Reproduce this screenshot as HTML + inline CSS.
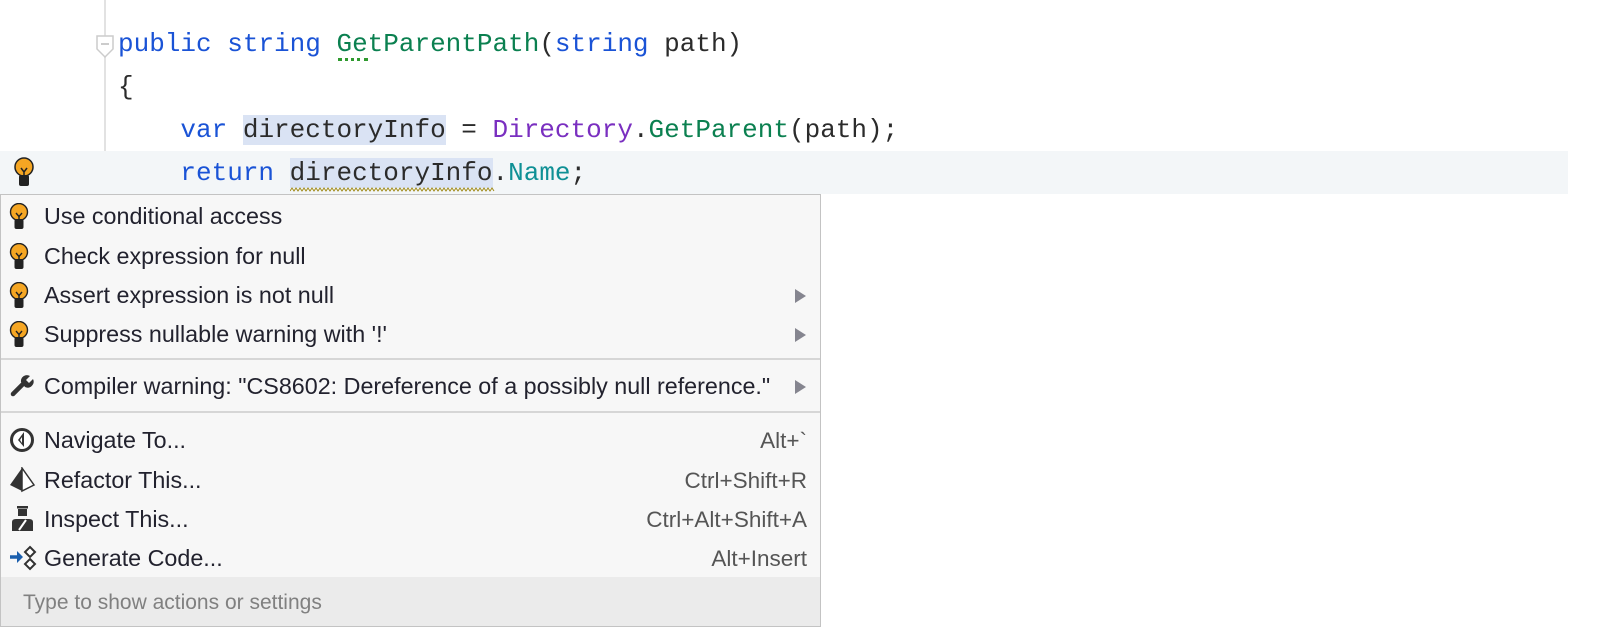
<!DOCTYPE html>
<html><head><style>
body{margin:0;width:1600px;height:640px;background:#fff;position:relative;overflow:hidden;font-family:"Liberation Sans",sans-serif}
.code{position:absolute;left:118px;font-family:"Liberation Mono",monospace;font-size:26px;color:#2b2b2b;white-space:pre;line-height:43px}
.kw{color:#1a53d6}.fn{color:#0b8050}.ty{color:#7a2fc0}.pr{color:#0f9095}
.sel{background:#dae3f4}
.menu{position:absolute;left:0;top:194px;width:819px;height:431px;background:#f7f7f7;border:1px solid #c3c3c3}
.it{position:absolute;left:0;width:819px;height:39px;font-size:23.3px;color:#22222e;line-height:39px}
.it .t{position:absolute;left:43px}
.it .k{position:absolute;right:13px;color:#555;font-size:22.5px}
.it .a{position:absolute;right:14px;top:13px;width:0;height:0;border-left:11px solid #85858f;border-top:7px solid transparent;border-bottom:7px solid transparent}
.it svg{position:absolute;left:8px;top:6px}
.sep{position:absolute;left:0;width:819px;height:2px;background:#d6d6d6}
</style></head><body>
<div style="position:absolute;left:104px;top:0;width:2px;height:194px;background:#e2e2e2"></div>
<svg style="position:absolute;left:96px;top:35px" width="18" height="24"><path d="M1 1H17V14L9 22L1 14Z" fill="#fff" stroke="#ccc" stroke-width="1.5"/><path d="M5 9H13" stroke="#bbb" stroke-width="1.5"/></svg>
<div style="position:absolute;left:0;top:151px;width:1568px;height:43px;background:#f3f6f8"></div>
<div class="code" style="top:23px"><span class="kw">public</span> <span class="kw">string</span> <span class="fn">GetParentPath</span>(<span class="kw">string</span> path)</div>
<div style="position:absolute;left:338px;top:58px;width:30px;border-top:3px dotted #2f9a2f"></div>
<div class="code" style="top:66px">{</div>
<div class="code" style="top:109px">    <span class="kw">var</span> <span class="sel">directoryInfo</span> = <span class="ty">Directory</span>.<span class="fn">GetParent</span>(path);</div>
<div class="code" style="top:152px">    <span class="kw">return</span> <span class="sel">directoryInfo</span>.<span class="pr">Name</span>;</div>
<svg style="position:absolute;left:290px;top:187px" width="205" height="5"><path d="M0 4 L2 1 L4 4 L6 1 L8 4 L10 1 L12 4 L14 1 L16 4 L18 1 L20 4 L22 1 L24 4 L26 1 L28 4 L30 1 L32 4 L34 1 L36 4 L38 1 L40 4 L42 1 L44 4 L46 1 L48 4 L50 1 L52 4 L54 1 L56 4 L58 1 L60 4 L62 1 L64 4 L66 1 L68 4 L70 1 L72 4 L74 1 L76 4 L78 1 L80 4 L82 1 L84 4 L86 1 L88 4 L90 1 L92 4 L94 1 L96 4 L98 1 L100 4 L102 1 L104 4 L106 1 L108 4 L110 1 L112 4 L114 1 L116 4 L118 1 L120 4 L122 1 L124 4 L126 1 L128 4 L130 1 L132 4 L134 1 L136 4 L138 1 L140 4 L142 1 L144 4 L146 1 L148 4 L150 1 L152 4 L154 1 L156 4 L158 1 L160 4 L162 1 L164 4 L166 1 L168 4 L170 1 L172 4 L174 1 L176 4 L178 1 L180 4 L182 1 L184 4 L186 1 L188 4 L190 1 L192 4 L194 1 L196 4 L198 1 L200 4 L202 1 L204 4" fill="none" stroke="#a08a1a" stroke-width="1"/></svg>
<svg style="position:absolute;left:13px;top:157px" width="22" height="32"><circle cx="11" cy="10" r="9" fill="#f5a623" stroke="#222" stroke-width="1.5"/><rect x="6" y="18" width="10" height="11" rx="2" fill="#222"/><path d="M8 11L11 15L14 11M11 15V19" stroke="#222" stroke-width="1.5" fill="none"/></svg>
<div class="menu">
<svg width="0" height="0" style="position:absolute"><defs><g id="bulb"><circle cx="10" cy="9" r="8.5" fill="#f5a623" stroke="#222" stroke-width="1.4"/><rect x="5.5" y="16" width="9" height="10" rx="2" fill="#222"/><path d="M7 10L10 13.5L13 10M10 13.5V17" stroke="#222" stroke-width="1.4" fill="none"/></g></defs></svg>
<div class="it" style="top:2px"><svg width="22" height="28"><use href="#bulb"/></svg><span class="t">Use conditional access</span></div>
<div class="it" style="top:42px"><svg width="22" height="28"><use href="#bulb"/></svg><span class="t">Check expression for null</span></div>
<div class="it" style="top:81px"><svg width="22" height="28"><use href="#bulb"/></svg><span class="t">Assert expression is not null</span><span class="a"></span></div>
<div class="it" style="top:120px"><svg width="22" height="28"><use href="#bulb"/></svg><span class="t">Suppress nullable warning with '!'</span><span class="a"></span></div>
<div class="sep" style="top:163px"></div>
<div class="it" style="top:172px"><svg width="28" height="26"><path d="M4 21L14 11" stroke="#333" stroke-width="4.5" stroke-linecap="round"/><path d="M12 9A6 6 0 0 1 21 3L17 7L20 10L24 6A6 6 0 0 1 16 14Z" fill="#333"/></svg><span class="t">Compiler warning: "CS8602: Dereference of a possibly null reference."</span><span class="a"></span></div>
<div class="sep" style="top:216px"></div>
<div class="it" style="top:226px"><svg width="28" height="28"><circle cx="13" cy="13" r="10.5" fill="#fff" stroke="#333" stroke-width="3"/><path d="M15 5L9 13L15 20Z" fill="#333"/><path d="M13 10L11 13L13 16Z" fill="#fff"/></svg><span class="t">Navigate To...</span><span class="k">Alt+`</span></div>
<div class="it" style="top:266px"><svg width="28" height="28"><path d="M13 1L1 18L13 24Z" fill="#333"/><path d="M13 1L25 18L13 24Z" fill="#fff" stroke="#333" stroke-width="1.5"/></svg><span class="t">Refactor This...</span><span class="k">Ctrl+Shift+R</span></div>
<div class="it" style="top:305px"><svg width="28" height="28"><rect x="8" y="0" width="11" height="2.5" fill="#333"/><rect x="9" y="3" width="9" height="7" fill="#333"/><path d="M3 25V16Q3 13 7 13H20Q24 13 24 16V25Z" fill="#333"/><path d="M10 24L17 14" stroke="#fff" stroke-width="2"/></svg><span class="t">Inspect This...</span><span class="k">Ctrl+Alt+Shift+A</span></div>
<div class="it" style="top:344px"><svg width="30" height="28"><path d="M1 12H9" stroke="#1b5fad" stroke-width="3.5"/><path d="M8 6L14 12L8 18Z" fill="#1b5fad"/><path d="M21 2L26 7L21 12L16 7Z M21 14L26 19L21 24L16 19Z" fill="#fff" stroke="#333" stroke-width="2"/></svg><span class="t">Generate Code...</span><span class="k">Alt+Insert</span></div>
<div style="position:absolute;left:0;top:382px;width:819px;height:49px;background:#ebebeb;font-size:21px;color:#808080;line-height:52px"><span style="position:absolute;left:22px">Type to show actions or settings</span></div>
</div>
</body></html>
